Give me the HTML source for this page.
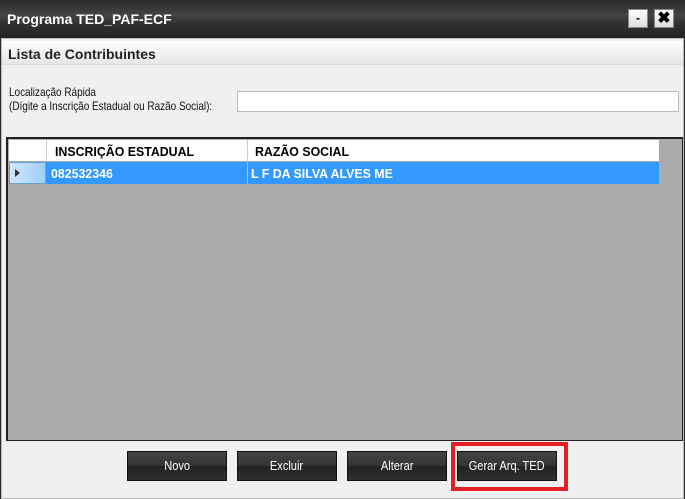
<!DOCTYPE html>
<html><head><meta charset="utf-8"><style>
*{margin:0;padding:0;box-sizing:border-box}
body{width:685px;height:499px;overflow:hidden;background:#2b2b2b;font-family:"Liberation Sans",sans-serif;position:relative}
.title{position:absolute;left:0;top:0;width:685px;height:38px;background:linear-gradient(#2a2a2a,#444 40%,#333 60%,#222)}
.title span{position:absolute;left:7px;top:11px;color:#fff;font-weight:bold;font-size:14px}
.wb{position:absolute;top:9px;width:20px;height:19px;background:linear-gradient(#fff,#ddd);border:1px solid #888;font-weight:bold;text-align:center}
.main{position:absolute;left:1px;top:38px;width:683px;height:461px;background:#f0f0f0;border:1px solid #bbb}
.hdr{position:absolute;left:0;top:2px;width:681px;height:24px;background:linear-gradient(#fff,#e6e6e6);border-bottom:1px solid #ddd}
.hdr span{position:absolute;left:6px;top:5px;font-weight:bold;font-size:14px;color:#222}
.lbl{position:absolute;left:7px;top:46px;font-size:12px;line-height:14px;color:#111;transform:scaleX(.83);transform-origin:left}
.inp{position:absolute;left:235px;top:52px;width:442px;height:21px;background:#fff;border:1px solid #bbb}
.grid{position:absolute;left:4px;top:98px;width:677px;height:304px;background:#ababab;border:2px solid #222;border-width:2px 1px 1px 2px}
.gh{position:absolute;left:1px;top:1px;width:650px;height:21px;background:#fff;font-weight:bold;font-size:13px}
.gr{position:absolute;left:1px;top:23px;width:650px;height:22px;background:#3399ff;color:#fff;font-weight:bold;font-size:13px}
.c{position:absolute;top:4px;transform:scaleX(.95);transform-origin:left}
.btn{position:absolute;top:412px;width:100px;height:30px;background:linear-gradient(#444,#333 50%,#222 51%,#2e2e2e);border:1px solid #111;color:#fff;font-size:13px;text-align:center;line-height:28px}
.btn span{display:inline-block;transform:scaleX(.85)}
.red{position:absolute;left:449px;top:403px;width:117px;height:49px;border:4px solid #e31e25}
</style></head><body>
<div class="title"><span>Programa TED_PAF-ECF</span>
<div class="wb" style="left:628px;font-size:12px;line-height:16px">-</div>
<div class="wb" style="left:654px;font-size:16px;line-height:17px">✖</div></div>
<div class="main">
<div class="hdr"><span>Lista de Contribuintes</span></div>
<div class="lbl">Localização Rápida<br>(Dígite a Inscrição Estadual ou Razão Social):</div>
<div class="inp"></div>
<div class="grid">
<div class="gh"><div style="position:absolute;left:37px;top:0;width:1px;height:21px;background:#ccc"></div><div style="position:absolute;left:238px;top:0;width:1px;height:21px;background:#ccc"></div><span class="c" style="left:46px">INSCRIÇÃO ESTADUAL</span><span class="c" style="left:246px">RAZÃO SOCIAL</span></div>
<div class="gr"><div style="position:absolute;left:0;top:0;width:37px;height:22px;background:linear-gradient(90deg,#cfe6fb,#9fcff7);border:1px solid #6a9fd0"><div style="position:absolute;left:5px;top:6px;border-left:5px solid #333;border-top:4px solid transparent;border-bottom:4px solid transparent"></div></div><div style="position:absolute;left:238px;top:0;width:1px;height:22px;background:#8cc4ff"></div><span class="c" style="left:42px">082532346</span><span class="c" style="left:242px">L F DA SILVA ALVES ME</span></div>
</div>
<div class="btn" style="left:125px"><span>Novo</span></div>
<div class="btn" style="left:235px"><span>Excluir</span></div>
<div class="btn" style="left:345px"><span>Alterar</span></div>
<div class="btn" style="left:455px"><span>Gerar Arq. TED</span></div>
<div class="red"></div>
</div>
</body></html>
